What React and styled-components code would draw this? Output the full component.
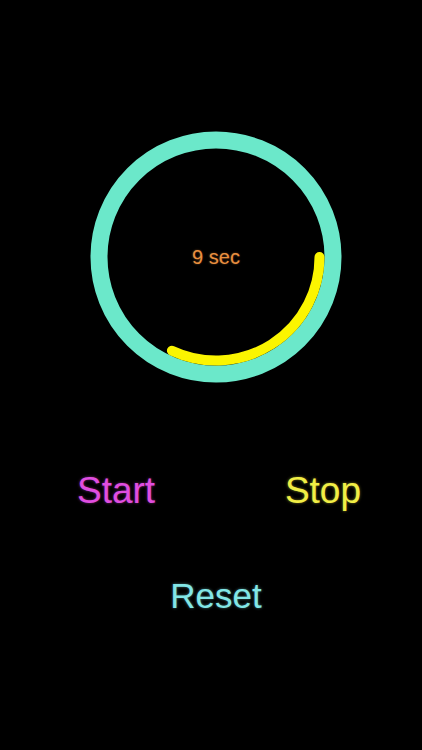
import React, { useState } from 'react'
import styled, { createGlobalStyle } from 'styled-components'

const GlobalStyle = createGlobalStyle`
  html, body {
    margin: 0;
    padding: 0;
    background: #000;
  }
  body {
    font-family: "Liberation Sans", Arial, sans-serif;
  }
`

const Screen = styled.main`
  width: 422px;
  height: 750px;
  background: #000;
  display: flex;
  flex-direction: column;
  align-items: center;
  padding-top: 131px;
  box-sizing: border-box;
  overflow: hidden;
`

// the ring and the label share one grid cell
const Dial = styled.div`
  display: grid;
  place-items: center;
  margin-left: 10px;
  & > * {
    grid-area: 1 / 1;
  }
`

const Seconds = styled.span`
  color: #e98f3f;
  font-size: 20px;
  line-height: 1;
  text-shadow: 0 0 2px rgba(233, 143, 63, 0.5);
`

const Controls = styled.div`
  width: 100%;
  box-sizing: border-box;
  display: flex;
  justify-content: space-between;
  align-items: baseline;
  padding: 0 61px 0 77px;
  margin-top: 87px;
`

const Action = styled.button`
  background: none;
  border: none;
  padding: 0;
  margin: 0;
  cursor: pointer;
  font-family: "Liberation Sans", Arial, sans-serif;
  font-size: ${p => p.size || 35}px;
  line-height: 42px;
  color: ${p => p.color};
  text-shadow: 0 0 3px ${p => p.glow};
`

const ResetRow = styled.div`
  display: flex;
  justify-content: center;
  margin-top: 63px;
  margin-left: 10px;
`

const SIZE = 252
const C = SIZE / 2

const arcPath = (r, from, to) => {
  const rad = a => (a * Math.PI) / 180
  const x1 = C + r * Math.cos(rad(from))
  const y1 = C + r * Math.sin(rad(from))
  const x2 = C + r * Math.cos(rad(to))
  const y2 = C + r * Math.sin(rad(to))
  const large = to - from > 180 ? 1 : 0
  return `M ${x1} ${y1} A ${r} ${r} 0 ${large} 1 ${x2} ${y2}`
}

const Ring = ({ seconds }) => (
  <svg width={SIZE} height={SIZE} viewBox={`0 0 ${SIZE} ${SIZE}`}>
    <circle cx={C} cy={C} r={117} fill="none" stroke="#6be8ca" strokeWidth={17} />
    <path
      d={arcPath(103.5, 0, seconds * 12.8)}
      fill="none"
      stroke="#fbf500"
      strokeWidth={10}
      strokeLinecap="round"
    />
  </svg>
)

const App = () => {
  const [seconds, setSeconds] = useState(9)

  return (
    <>
      <GlobalStyle />
      <Screen>
        <Dial>
          <Ring seconds={seconds} />
          <Seconds>{seconds} sec</Seconds>
        </Dial>

        <Controls>
          <Action size={37} color="#e04ee0" glow="rgba(224,78,224,0.5)">Start</Action>
          <Action size={37} color="#f1ee45" glow="rgba(241,238,69,0.5)">Stop</Action>
        </Controls>

        <ResetRow>
          <Action color="#82e6e6" glow="rgba(130,230,230,0.5)" onClick={() => setSeconds(0)}>
            Reset
          </Action>
        </ResetRow>
      </Screen>
    </>
  )
}

export default App
